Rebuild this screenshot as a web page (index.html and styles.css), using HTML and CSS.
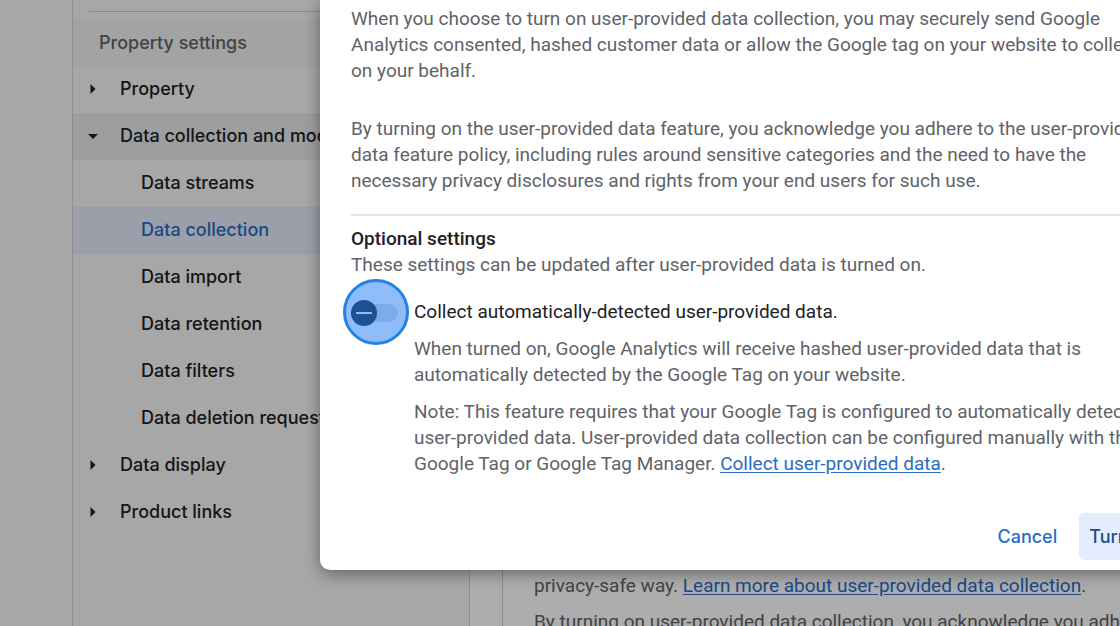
FILE: index.html
```
<!DOCTYPE html>
<html lang="en">
<head>
    <meta charset="UTF-8">
    <meta name="viewport" content="width=device-width, initial-scale=1">
    <title>Data collection</title>
    <link rel="stylesheet" href="styles.css">
</head>
<body>
    <div class="page">
        <nav class="sidebar">
            <h2 class="sidebar-title">Property settings</h2>
            <a href="#" class="nav-item">
                <svg class="arrow" viewBox="0 0 10 10"><path d="M2.5 0L7.5 5L2.5 10z"/></svg>
                Property
            </a>
            <a href="#" class="nav-item open">
                <svg class="arrow" viewBox="0 0 10 10"><path d="M0 3H10L5 8z"/></svg>
                Data collection and modification
            </a>
            <a href="#" class="nav-item sub">Data streams</a>
            <a href="#" class="nav-item sub selected">Data collection</a>
            <a href="#" class="nav-item sub">Data import</a>
            <a href="#" class="nav-item sub">Data retention</a>
            <a href="#" class="nav-item sub">Data filters</a>
            <a href="#" class="nav-item sub">Data deletion requests</a>
            <a href="#" class="nav-item">
                <svg class="arrow" viewBox="0 0 10 10"><path d="M2.5 0L7.5 5L2.5 10z"/></svg>
                Data display
            </a>
            <a href="#" class="nav-item">
                <svg class="arrow" viewBox="0 0 10 10"><path d="M2.5 0L7.5 5L2.5 10z"/></svg>
                Product links
            </a>
        </nav>
        <main class="content">
            <p>privacy-safe way. <a href="#">Learn more about user-provided data collection</a>.</p>
            <p>By turning on user-provided data collection, you acknowledge you adhere</p>
        </main>
    </div>

    <div class="backdrop"></div>

    <div class="dialog" role="dialog" aria-label="User-provided data collection">
        <p class="intro">
            When you choose to turn on user-provided data collection, you may securely send Google<br>
            Analytics consented, hashed customer data or allow the Google tag on your website to collect<br>
            on your behalf.
        </p>
        <p class="policy">
            By turning on the user-provided data feature, you acknowledge you adhere to the user-provided<br>
            data feature policy, including rules around sensitive categories and the need to have the<br>
            necessary privacy disclosures and rights from your end users for such use.
        </p>
        <hr>
        <h3>Optional settings</h3>
        <p>These settings can be updated after user-provided data is turned on.</p>
        <div class="option">
            <div class="switch">
                <input type="checkbox" role="switch" id="autoDetect">
                <span class="thumb"></span>
                <span class="highlight"></span>
            </div>
            <div class="option-text">
                <label for="autoDetect">Collect automatically-detected user-provided data.</label>
                <p>
                    When turned on, Google Analytics will receive hashed user-provided data that is<br>
                    automatically detected by the Google Tag on your website.
                </p>
                <p>
                    Note: This feature requires that your Google Tag is configured to automatically detect<br>
                    user-provided data. User-provided data collection can be configured manually with the<br>
                    Google Tag or Google Tag Manager. <a href="#">Collect user-provided data</a>.
                </p>
            </div>
        </div>
        <div class="actions">
            <button type="button">Cancel</button>
            <button type="button" class="primary">Turn on</button>
        </div>
    </div>
</body>
</html>
```

FILE: styles.css
```
* {
    box-sizing: border-box;
}
body {
    margin: 0;
    height: 100vh;
    overflow: hidden;
    position: relative;
    font-family: Roboto, Arial, sans-serif;
    font-size: 19px;
    line-height: 26px;
    color: #5f6368;
    background: #fff;
}
p, h2, h3 {
    margin: 0;
}
a {
    color: #2a6cc4;
    text-underline-offset: 2px;
}

/* page behind the dialog */
.page {
    display: flex;
    min-height: 100vh;
    padding-left: 72px;
    background: #f6f7f8;
}
.sidebar {
    flex: 0 0 398px;
    padding-top: 11px;
    border-left: 1px solid #cfd1d4;
    border-right: 1px solid #cfd1d4;
    font-family: Inter, Roboto, sans-serif;
    font-size: 18px;
}
.sidebar::before {
    content: "";
    display: block;
    height: 1px;
    margin: 0 16px 7px;
    background: #c6c8ca;
}
.sidebar-title {
    padding: 0 26px;
    font-size: 18px;
    font-weight: 500;
    line-height: 47px;
    background: #f0f1f2;
}
.nav-item {
    display: flex;
    align-items: center;
    gap: 22px;
    height: 47px;
    padding: 0 0 2px 15px;
    font-weight: 500;
    white-space: nowrap;
    color: #202124;
    text-decoration: none;
}
.nav-item.sub {
    padding-left: 68px;
}
.nav-item.open {
    background: #e8e9ea;
}
.nav-item.selected {
    background: #e4ebf9;
    color: #2a6cc4;
}
.arrow {
    flex: none;
    width: 10px;
    height: 10px;
    fill: #202124;
}
.content {
    flex: 1;
    display: flex;
    flex-direction: column;
    gap: 10px;
    padding: 573px 0 0 31px;
    margin-left: 32px;
    height: 100vh;
    overflow: hidden;
    border-left: 1px solid #cfd1d4;
    background: #fff;
    box-shadow: -32px 0 #fff;
    white-space: nowrap;
}
.backdrop {
    position: absolute;
    inset: 0;
    background: rgba(0, 0, 0, 0.32);
}

/* dialog */
.dialog {
    position: absolute;
    top: 0;
    left: 320px;
    right: -76px;
    padding: 6px 31px 10px;
    border-radius: 0 0 10px 10px;
    background: #fff;
    box-shadow: 0 4px 16px rgba(0, 0, 0, 0.4);
    white-space: nowrap;
}
.policy {
    margin-top: 32px;
}
hr {
    height: 2px;
    margin: 20px 0 10px;
    border: none;
    background: #e4e5e6;
}
h3 {
    font-size: 19px;
    font-weight: 500;
    color: #202124;
}
.option {
    display: flex;
    gap: 16px;
    margin-top: 21px;
}
.switch {
    position: relative;
    flex: 0 0 47px;
    height: 26px;
}
.switch input {
    appearance: none;
    display: block;
    width: 47px;
    height: 18px;
    margin: 5px 0;
    border-radius: 9px;
    background: #dadce0;
}
.thumb {
    position: absolute;
    top: 1px;
    left: 0;
    width: 26px;
    height: 26px;
    border-radius: 50%;
    background: #1e5191;
    z-index: 2;
    pointer-events: none;
}
.thumb::after {
    content: "";
    position: absolute;
    top: 12px;
    left: 5px;
    width: 16px;
    height: 2px;
    background: #8fbcfb;
}
.highlight {
    position: absolute;
    top: -20px;
    left: -8px;
    width: 66px;
    height: 66px;
    border: 3px solid #2283e2;
    border-radius: 50%;
    background: rgba(32, 122, 248, 0.5);
    pointer-events: none;
}
.option-text {
    display: flex;
    flex-direction: column;
    gap: 11px;
}
.option-text label {
    color: #202124;
}
.actions {
    display: flex;
    justify-content: flex-end;
    gap: 12px;
    margin-top: 36px;
}
.actions button {
    height: 47px;
    padding: 0 10px;
    border: none;
    border-radius: 5px;
    background: none;
    color: #2a6cc4;
    font-family: Inter, Roboto, sans-serif;
    font-size: 18px;
    font-weight: 500;
    cursor: pointer;
}
.actions .primary {
    background: #e4edfd;
    color: #1f4b8f;
}
```
